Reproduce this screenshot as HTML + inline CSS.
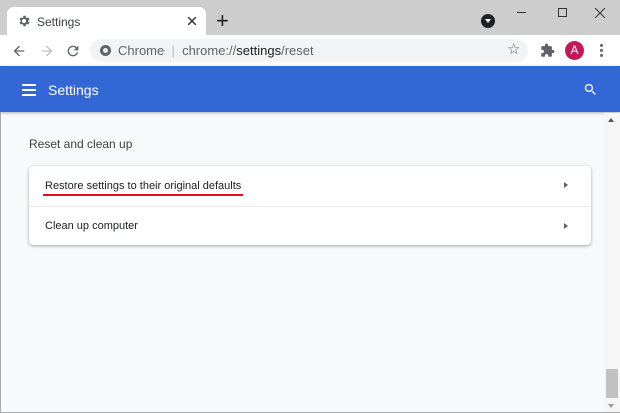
<!DOCTYPE html>
<html><head><meta charset="utf-8"><style>
*{margin:0;padding:0;box-sizing:border-box}
body{width:620px;height:413px;overflow:hidden;font-family:"Liberation Sans",Arial,sans-serif;background:#f8f9fa;position:relative}
.abs{position:absolute}
</style></head><body>
<div class="abs" style="left:0;top:0;width:620px;height:35px;background:#cdcdcd"></div>
<div class="abs" style="left:7px;top:7px;width:199px;height:28px;background:#fff;border-radius:7px 7px 0 0"></div>
<svg class="abs" style="left:17px;top:14px" width="14" height="14" viewBox="0 0 24 24"><path fill="#5f6368" d="M19.4 13a7.5 7.5 0 000-2l2.1-1.6-2-3.5-2.5 1a7 7 0 00-1.7-1L14.9 3h-4l-.4 2.9a7 7 0 00-1.7 1l-2.5-1-2 3.5L6.4 11a7.5 7.5 0 000 2l-2.1 1.6 2 3.5 2.5-1a7 7 0 001.7 1l.4 2.9h4l.4-2.9a7 7 0 001.7-1l2.5 1 2-3.5zM12 15.5a3.5 3.5 0 110-7 3.5 3.5 0 010 7z"/></svg>
<div class="abs" style="left:37px;top:15px;font-size:12px;color:#3c4043">Settings</div>
<svg class="abs" style="left:188px;top:17px" width="8" height="8" viewBox="0 0 8 8"><path d="M0 0L8 8M8 0L0 8" stroke="#333" stroke-width="1.5"/></svg>
<div class="abs" style="left:216px;top:8px;font-size:22px;color:#202124;font-weight:300">+</div>
<div class="abs" style="left:481px;top:14px;width:14px;height:14px;border-radius:50%;background:#202124"></div>
<div class="abs" style="left:485px;top:19px;width:0;height:0;border-left:3px solid transparent;border-right:3px solid transparent;border-top:4px solid #fff"></div>
<div class="abs" style="left:517px;top:12px;width:9px;height:1px;background:#333"></div>
<div class="abs" style="left:558px;top:8px;width:9px;height:9px;border:1px solid #333"></div>
<svg class="abs" style="left:595px;top:8px" width="10" height="10" viewBox="0 0 10 10"><path d="M0 0L10 10M10 0L0 10" stroke="#333" stroke-width="1"/></svg>
<div class="abs" style="left:0;top:35px;width:620px;height:31px;background:#fff"></div>
<svg class="abs" style="left:11px;top:43px" width="16" height="16" viewBox="0 0 24 24"><path fill="#5f6368" d="M20 11H7.8l5.6-5.6L12 4l-8 8 8 8 1.4-1.4L7.8 13H20z"/></svg>
<svg class="abs" style="left:39px;top:43px" width="16" height="16" viewBox="0 0 24 24"><path fill="#bdc1c6" d="M4 11h12.2l-5.6-5.6L12 4l8 8-8 8-1.4-1.4 5.6-5.6H4z"/></svg>
<svg class="abs" style="left:65px;top:43px" width="16" height="16" viewBox="0 0 24 24"><path fill="#5f6368" d="M17.6 6.4A8 8 0 1019.7 14h-2.1a6 6 0 11-1.4-6.2L13 11h7V4z"/></svg>
<div class="abs" style="left:90px;top:39px;width:438px;height:23px;border-radius:12px;background:#f1f3f4"></div>
<div class="abs" style="left:100px;top:45px;width:11px;height:11px;border-radius:50%;background:#5f6368"></div>
<div class="abs" style="left:103px;top:48px;width:5px;height:5px;border-radius:50%;background:#f1f3f4"></div>
<div class="abs" style="left:118px;top:43px;font-size:13px;color:#5f6368">Chrome <span style="color:#bbb">&nbsp;|&nbsp;</span> chrome://<span style="color:#202124">settings</span>/reset</div>
<div class="abs" style="left:507px;top:40px;font-size:15px;color:#5f6368">☆</div>
<svg class="abs" style="left:540px;top:43px" width="15" height="15" viewBox="0 0 24 24"><path fill="#5f6368" d="M20.5 11H19V7a2 2 0 00-2-2h-4V3.5a2.5 2.5 0 00-5 0V5H4a2 2 0 00-2 2v3.8h1.5a2.7 2.7 0 010 5.4H2V20a2 2 0 002 2h3.8v-1.5a2.7 2.7 0 015.4 0V22H17a2 2 0 002-2v-4h1.5a2.5 2.5 0 000-5z"/></svg>
<div class="abs" style="left:565px;top:41px;width:19px;height:19px;border-radius:50%;background:#c2185b;color:#fff;font-size:12px;text-align:center;line-height:19px">A</div>
<div class="abs" style="left:600px;top:44px;width:3px;height:3px;border-radius:50%;background:#5f6368;box-shadow:0 5px 0 #5f6368,0 10px 0 #5f6368"></div>
<div class="abs" style="left:0;top:66px;width:620px;height:46px;background:#3367d6;box-shadow:0 1px 3px rgba(0,0,0,.3)"></div>
<div class="abs" style="left:22px;top:84px;width:14px;height:2px;background:#fff;box-shadow:0 5px 0 #fff,0 10px 0 #fff"></div>
<div class="abs" style="left:48px;top:82px;font-size:14px;color:#fff">Settings</div>
<svg class="abs" style="left:583px;top:82px" width="15" height="15" viewBox="0 0 24 24"><path fill="#fff" d="M15.5 14h-.8l-.3-.3A6.5 6.5 0 109.5 16a6.5 6.5 0 004.2-1.6l.3.3v.8l5 5 1.5-1.5zm-6 0a4.5 4.5 0 110-9 4.5 4.5 0 010 9z"/></svg>
<div class="abs" style="left:0;top:112px;width:1px;height:301px;background:#aaa"></div>
<div class="abs" style="left:0;top:412px;width:620px;height:1px;background:#aaa"></div>
<div class="abs" style="left:604px;top:113px;width:16px;height:299px;background:#f6f6f6"></div>
<div class="abs" style="left:608px;top:118px;border-left:3px solid transparent;border-right:3px solid transparent;border-bottom:4px solid #555"></div>
<div class="abs" style="left:606px;top:369px;width:12px;height:29px;background:#c1c1c1"></div>
<div class="abs" style="left:608px;top:404px;border-left:3px solid transparent;border-right:3px solid transparent;border-top:4px solid #999"></div>
<div class="abs" style="left:29px;top:137px;font-size:12px;color:#3c4043">Reset and clean up</div>
<div class="abs" style="left:29px;top:166px;width:562px;height:79px;background:#fff;border-radius:4px;box-shadow:0 1px 2px rgba(60,64,67,.3),0 1px 3px 1px rgba(60,64,67,.12)"></div>
<div class="abs" style="left:29px;top:206px;width:562px;height:1px;background:#ececec"></div>
<div class="abs" style="left:45px;top:180px;font-size:11px;color:#202124">Restore settings to their original defaults</div>
<div class="abs" style="left:43px;top:194px;width:200px;height:1.5px;background:#e8101b"></div>
<div class="abs" style="left:45px;top:220px;font-size:11px;color:#202124">Clean up computer</div>
<div class="abs" style="left:564px;top:182px;border-top:3px solid transparent;border-bottom:3px solid transparent;border-left:4px solid #5f6368"></div>
<div class="abs" style="left:564px;top:223px;border-top:3px solid transparent;border-bottom:3px solid transparent;border-left:4px solid #5f6368"></div>
</body></html>
